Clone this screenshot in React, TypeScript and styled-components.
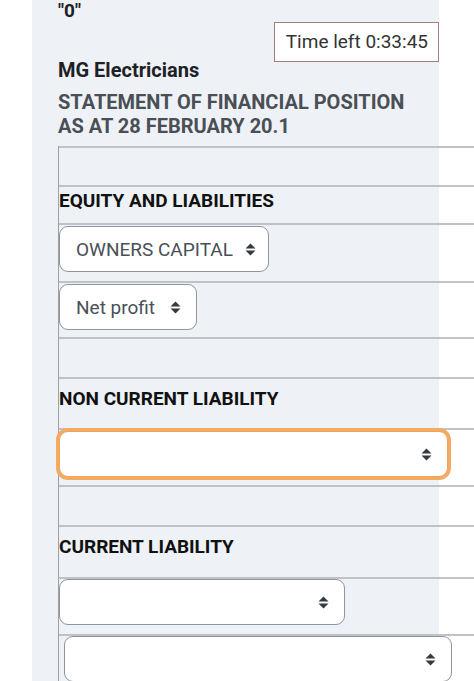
import React, { FC } from 'react';
import styled, { createGlobalStyle, css } from 'styled-components';

const Global = createGlobalStyle`
  html, body {
    margin: 0;
    padding: 0;
    background: #fff;
    overflow: hidden;
  }
  body {
    font-family: Roboto, 'Liberation Sans', sans-serif;
    color: #1d2125;
  }
`;

const Page = styled.div`
  width: 474px;
  height: 681px;
  overflow: hidden;
  padding-left: 32px;
  box-sizing: border-box;
`;

const Panel = styled.div`
  width: 407px;
  min-height: 681px;
  background: #eef1f6;
  padding: 0 0 0 26px;
  box-sizing: border-box;
`;

const Mark = styled.div`
  font-size: 19px;
  font-weight: 700;
  line-height: 22px;
  height: 22px;
`;

const TimerRow = styled.div`
  display: flex;
  justify-content: flex-end;
`;

const Timer = styled.div`
  background: #fff;
  border: 1px solid #a67c7c;
  font-size: 19px;
  line-height: 24px;
  color: #333;
  padding: 7px 10px 7px 11px;
`;

const Company = styled.h3`
  margin: -4px 0 0;
  font-size: 20px;
  font-weight: 700;
  line-height: 24px;
  color: #1d2125;
`;

const Statement = styled.h4`
  margin: 8px 0 8px;
  font-size: 20px;
  font-weight: 700;
  line-height: 24px;
  color: #4a4f55;
`;

const Table = styled.div`
  width: 440px;
  border-left: 1px solid #9da1a6;
`;

const Row = styled.div<{ $h: number; $pt: number; $top?: boolean }>`
  height: ${({ $h }) => $h}px;
  padding-top: ${({ $pt }) => $pt}px;
  box-sizing: border-box;
  border-bottom: 2px solid #bfc2c6;
  ${({ $top }) => $top && css`border-top: 2px solid #bfc2c6;`}
`;

const Heading = styled.div`
  font-size: 19px;
  font-weight: 700;
  line-height: 24px;
  color: #111;
`;

const Select = styled.div<{ $w?: number; $focus?: boolean; $ml?: number }>`
  display: inline-flex;
  align-items: center;
  gap: ${({ $w }) => ($w ? 12 : 15)}px;
  height: 46px;
  box-sizing: border-box;
  width: ${({ $w }) => ($w ? `${$w}px` : 'auto')};
  margin-left: ${({ $ml }) => $ml || 0}px;
  padding: 0 15px 0 16px;
  background: #fff;
  border: 1px solid #8f959e;
  border-radius: 9px;
  font-size: 19px;
  color: #495057;
  white-space: nowrap;
  ${({ $focus }) => $focus && css`
    border-color: #f0a35a;
    box-shadow: 0 0 0 3px #f3aa63;
  `}
`;

const Caret = styled.svg`
  margin-left: auto;
  flex-shrink: 0;
`;

const Arrows: FC = () => (
  <Caret width="11" height="13" viewBox="0 0 11 13">
    <path d="M5.5 0.5 L10.5 5.5 L0.5 5.5 Z" fill="#343a40" />
    <path d="M5.5 12.5 L10.5 7.5 L0.5 7.5 Z" fill="#343a40" />
  </Caret>
);

export default function App() {
  return (
    <Page>
      <Global />
      <Panel>
        <Mark>"0"</Mark>
        <TimerRow>
          <Timer>Time left 0:33:45</Timer>
        </TimerRow>
        <Company>MG Electricians</Company>
        <Statement>
          STATEMENT OF FINANCIAL POSITION
          <br />
          AS AT 28 FEBRUARY 20.1
        </Statement>
        <Table>
          <Row $h={41} $pt={0} $top />
          <Row $h={38} $pt={2}><Heading>EQUITY AND LIABILITIES</Heading></Row>
          <Row $h={58} $pt={1}>
            <Select $w={210}>OWNERS CAPITAL<Arrows /></Select>
          </Row>
          <Row $h={56} $pt={1}>
            <Select>Net profit<Arrows /></Select>
          </Row>
          <Row $h={40} $pt={0} />
          <Row $h={51} $pt={8}><Heading>NON CURRENT LIABILITY</Heading></Row>
          <Row $h={57} $pt={1}>
            <Select $w={389} $focus><Arrows /></Select>
          </Row>
          <Row $h={40} $pt={0} />
          <Row $h={52} $pt={8}><Heading>CURRENT LIABILITY</Heading></Row>
          <Row $h={57} $pt={0}>
            <Select $w={286}><Arrows /></Select>
          </Row>
          <Row $h={57} $pt={0}>
            <Select $w={388} $ml={5}><Arrows /></Select>
          </Row>
        </Table>
      </Panel>
    </Page>
  );
}
